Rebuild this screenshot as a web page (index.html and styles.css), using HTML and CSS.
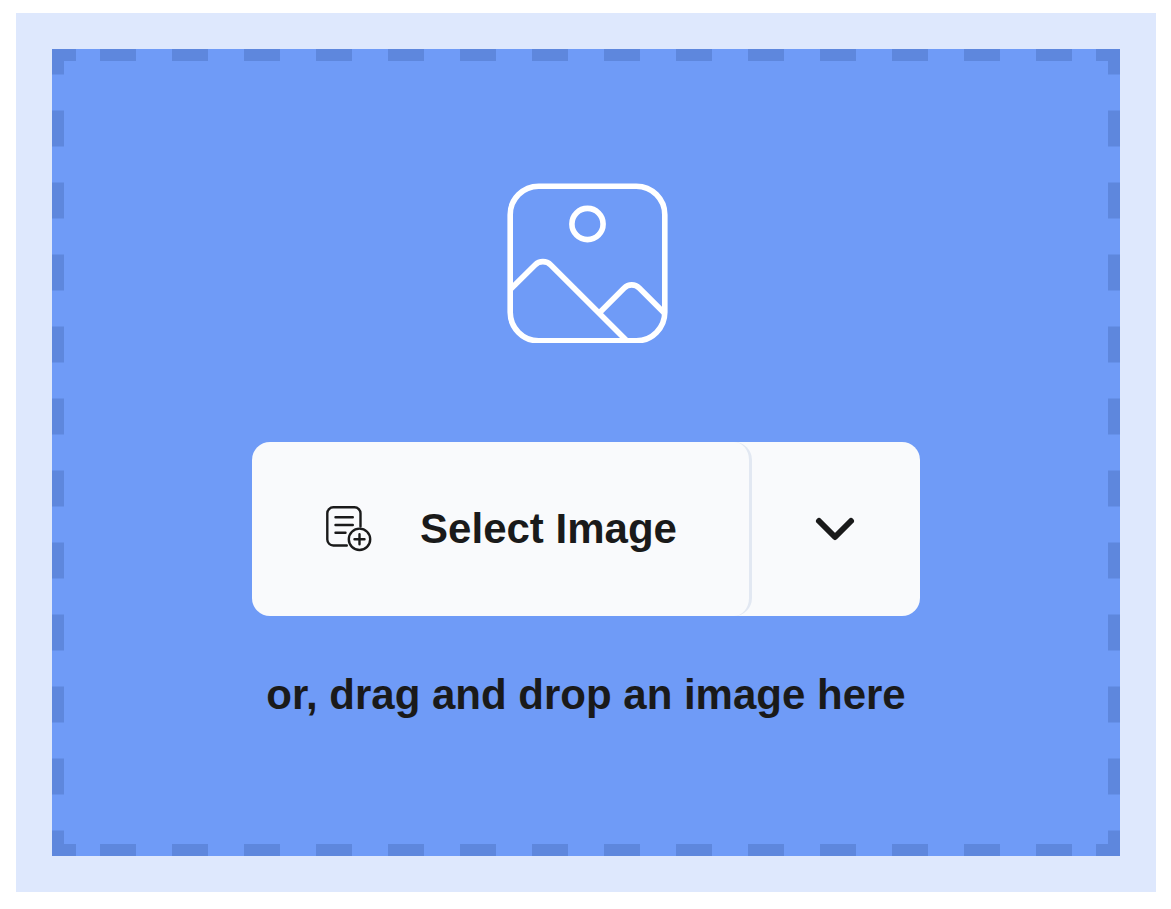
FILE: index.html
```html
<!DOCTYPE html>
<html lang="en">
<head>
  <meta charset="UTF-8">
  <meta name="viewport" content="width=device-width, initial-scale=1">
  <title>Select Image</title>
  <link rel="stylesheet" href="styles.css">
</head>
<body>
  <main class="uploader">
    <section class="dropzone">
      <svg class="picture-icon" viewBox="-4 0 164 160" aria-hidden="true">
        <rect x="2.2" y="3.2" width="154.6" height="154.6" rx="28.5"/>
        <circle cx="79.5" cy="41" r="15.6"/>
        <path d="M3 105.7 27 81.9a11.2 11.2 0 0 1 15.8 0L118 157.1"/>
        <path d="M91.5 129.7l24.7-24.7a10.6 10.6 0 0 1 15 0L157 130.8"/>
      </svg>

      <div class="select-group">
        <button type="button" class="select-button">
          <svg class="button-icon" viewBox="0 0 48 48" aria-hidden="true">
            <path d="M36.5 21.5V8.3a6 6 0 0 0-6-6H9.3a6 6 0 0 0-6 6v26.2a6 6 0 0 0 6 6h13.5"/>
            <path d="M11.5 12.3h17.3M11.5 20h17.3M11.5 27.7h10"/>
            <circle cx="35.5" cy="34.3" r="10.7"/>
            <path d="M30.5 34.3h10M35.5 29.3v10"/>
          </svg>
          Select Image
        </button>
        <button type="button" class="more-button" aria-label="More sources">
          <svg class="chevron-icon" viewBox="0 0 48 48" aria-hidden="true">
            <path d="M7 16l16 16 16-16"/>
          </svg>
        </button>
      </div>

      <p class="hint">or, drag and drop an image here</p>
    </section>
  </main>
</body>
</html>
```
FILE: styles.css
```css
* {
  box-sizing: border-box;
}

body {
  margin: 0;
  padding: 13px 15px 17px 16px;
  background: #fff;
  color: #1a1a1a;
  font-family: "Liberation Sans", Arial, Helvetica, sans-serif;
}

.uploader {
  padding: 36px;
  background: #dee8fd;
}

/* dashed frame: four corner pieces, then one repeating strip per side */
.dropzone {
  --dash: #5e87dd;
  --strip: var(--dash) 18px, transparent 18px 54px, var(--dash) 54px;
  display: flex;
  flex-direction: column;
  align-items: center;
  padding: 134px 24px 137px;
  background-color: #6f9bf7;
  background-image:
    linear-gradient(var(--dash), var(--dash)),
    linear-gradient(var(--dash), var(--dash)),
    linear-gradient(var(--dash), var(--dash)),
    linear-gradient(var(--dash), var(--dash)),
    linear-gradient(90deg, var(--strip)),
    linear-gradient(90deg, var(--strip)),
    linear-gradient(var(--strip)),
    linear-gradient(var(--strip));
  background-size:
    24px 12px, 24px 12px, 24px 12px, 24px 12px,
    72px 12px, 72px 12px,
    12px 72px, 12px 72px;
  background-position:
    left top, right top, left bottom, right bottom,
    center top, center bottom,
    left center, right center;
  background-repeat:
    no-repeat, no-repeat, no-repeat, no-repeat,
    repeat-x, repeat-x,
    repeat-y, repeat-y;
}

svg {
  display: block;
  fill: none;
  stroke: currentColor;
  stroke-linecap: round;
  stroke-linejoin: round;
}

.picture-icon {
  width: 164px;
  height: 160px;
  color: #fff;
  stroke-width: 5.6;
  stroke-linecap: butt;
}

.select-group {
  display: flex;
  margin-top: 99px;
  border-radius: 18px;
  background: #f9fafc;
}

.select-button,
.more-button {
  display: flex;
  align-items: center;
  border: 0;
  border-radius: 18px;
  background: transparent;
  color: inherit;
  cursor: pointer;
}

.select-button {
  gap: 48px;
  padding: 63px 72px;
  border-right: 3px solid #e2e8f2;
  font: bold 42px/48px "Liberation Sans", Arial, Helvetica, sans-serif;
}

.more-button {
  padding: 0 60px;
}

.button-icon,
.chevron-icon {
  width: 48px;
  height: 48px;
}

.button-icon {
  stroke-width: 2.4;
}

.chevron-icon {
  stroke-width: 6;
}

.hint {
  margin: 55px 0 0;
  font-size: 42px;
  font-weight: bold;
  line-height: 48px;
  text-align: center;
}
```
